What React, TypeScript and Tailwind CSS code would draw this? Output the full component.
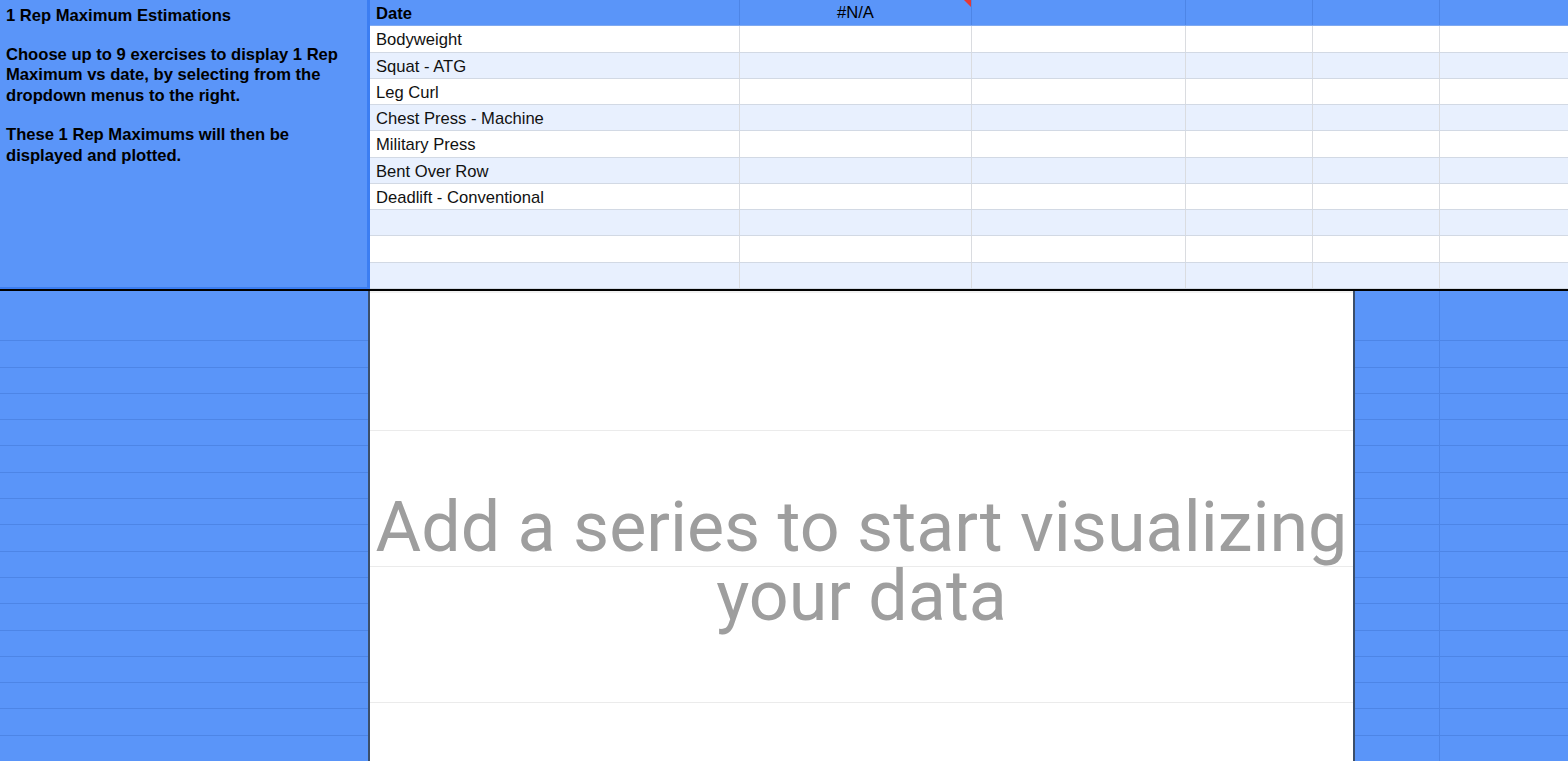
import React from 'react'

const exercises = [
  'Bodyweight',
  'Squat - ATG',
  'Leg Curl',
  'Chest Press - Machine',
  'Military Press',
  'Bent Over Row',
  'Deadlift - Conventional',
  '',
  '',
  '',
]

// widths of columns B..G
const cols = ['w-[370px]', 'w-[232px]', 'w-[214px]', 'w-[127px]', 'w-[127px]', 'flex-1']

function BlueRows({ count }: { count: number }) {
  return (
    <div className="flex flex-col pt-[24px]">
      {Array.from({ length: count }).map((_, i) => (
        <div key={i} className="h-[26.3px] shrink-0 border-b border-[#4d85e6]" />
      ))}
    </div>
  )
}

export default function App() {
  return (
    <div
      className="w-[1568px] h-[761px] overflow-hidden bg-[#5a95f9] text-[16.6px] text-black flex flex-col"
      style={{ fontFamily: '"Liberation Sans", Arial, sans-serif' }}
    >
      {/* top section */}
      <div className="h-[289px] flex shrink-0">
        <div className="w-[370px] shrink-0 bg-[#5a95f9] border-r-[3px] border-b-2 border-[#3c7ef2] px-[6px] pt-[6px] font-bold leading-[20.5px]">
          <p>1 Rep Maximum Estimations</p>
          <p className="mt-[18px]">
            Choose up to 9 exercises to display 1 Rep Maximum vs date, by selecting from the dropdown menus to the
            right.
          </p>
          <p className="mt-[19px]">These 1 Rep Maximums will then be displayed and plotted.</p>
        </div>
        <div className="flex-1 grid grid-rows-[repeat(11,1fr)] leading-[20px]">
          {/* header row */}
          <div className="flex bg-[#5a95f9] border-b border-[#7fa9f0]">
            <div className={`${cols[0]} shrink-0 border-r border-[#4d85e6] px-[6px] pt-[4px] font-bold`}>Date</div>
            <div className={`${cols[1]} shrink-0 border-r border-[#4d85e6] relative text-center pt-[3px]`}>
              #N/A
              <div className="absolute top-0 right-0 w-0 h-0 border-l-[7px] border-l-transparent border-t-[7px] border-t-[#e53935]" />
            </div>
            <div className={`${cols[2]} shrink-0 border-r border-[#4d85e6]`} />
            <div className={`${cols[3]} shrink-0 border-r border-[#4d85e6]`} />
            <div className={`${cols[4]} shrink-0 border-r border-[#4d85e6]`} />
            <div className={cols[5]} />
          </div>
          {exercises.map((name, i) => (
            <div
              key={i}
              className={`flex border-b border-[#d2d9e4] ${i % 2 === 0 ? 'bg-white' : 'bg-[#e8f0fe]'}`}
            >
              <div className={`${cols[0]} shrink-0 border-r border-[#dadce0] px-[6px] pt-[4px] text-[#111]`}>
                {name}
              </div>
              <div className={`${cols[1]} shrink-0 border-r border-[#dadce0]`} />
              <div className={`${cols[2]} shrink-0 border-r border-[#dadce0]`} />
              <div className={`${cols[3]} shrink-0 border-r border-[#dadce0]`} />
              <div className={`${cols[4]} shrink-0 border-r border-[#dadce0]`} />
              <div className={cols[5]} />
            </div>
          ))}
        </div>
      </div>

      <div className="h-[2px] bg-black shrink-0" />

      {/* bottom section */}
      <div className="flex flex-1 min-h-0">
        <div className="w-[368px] shrink-0 overflow-hidden">
          <BlueRows count={18} />
        </div>
        <div className="w-[987px] shrink-0 bg-white border-l-2 border-r-2 border-[#3b4f6b] relative overflow-hidden">
          <div className="h-[2px] bg-[#f1f1f1]" />
          <div className="h-[138px] border-b border-[#ebebeb]" />
          <div className="h-[136px] border-b border-[#ebebeb]" />
          <div className="h-[136px] border-b border-[#ebebeb]" />
          <div
            className="absolute inset-x-0 top-[202px] text-center text-[#9e9e9e] text-[70px] leading-[69px]"
            style={{ fontFamily: 'Roboto, "Noto Sans", sans-serif' }}
          >
            Add a series to start visualizing
            <br />
            your data
          </div>
        </div>
        <div className="w-[85px] shrink-0 overflow-hidden border-r border-[#4d85e6]">
          <BlueRows count={18} />
        </div>
        <div className="flex-1 overflow-hidden">
          <BlueRows count={18} />
        </div>
      </div>
    </div>
  )
}
